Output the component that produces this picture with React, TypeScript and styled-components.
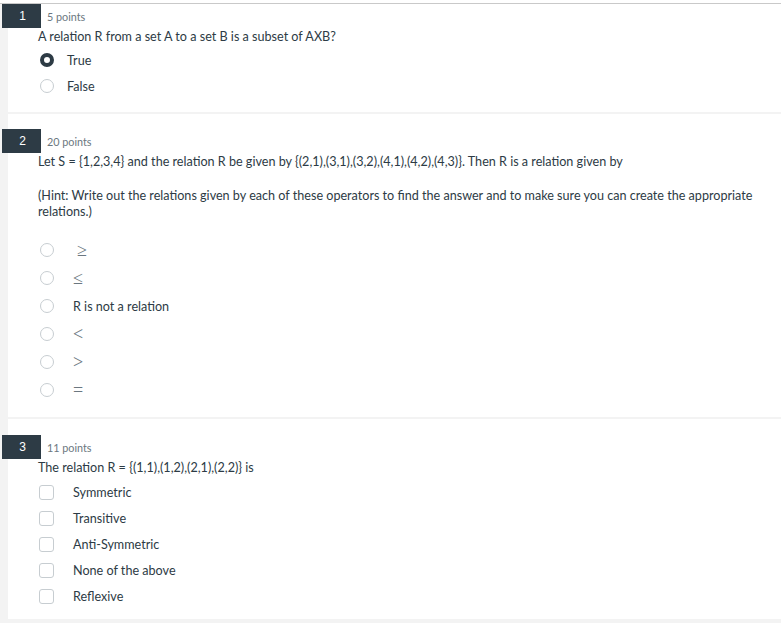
import React from "react";
import styled, { createGlobalStyle } from "styled-components";

const GlobalStyle = createGlobalStyle`
  html, body { margin: 0; padding: 0; }
  body {
    background: #f3f3f3;
    font-family: Lato, "Open Sans", "Liberation Sans", sans-serif;
    color: #2d3b45;
    width: 781px;
    height: 623px;
    overflow: hidden;
  }
`;

const TopRule = styled.div`
  height: 3px;
  background: #fff;
  border-bottom: 1px solid #c9c9c9;
`;

const Card = styled.section<{ $pt: number; $pb: number }>`
  background: #fff;
  margin-left: 8px;
  margin-bottom: 2px;
  padding-top: ${(p) => p.$pt}px;
  padding-bottom: ${(p) => p.$pb}px;
`;

const Header = styled.div`
  display: flex;
  align-items: center;
  height: 24px;
`;

const Badge = styled.div`
  margin-left: -6px;
  width: 39px;
  height: 24px;
  background: #2d3b45;
  color: #fff;
  font-family: "Liberation Sans", Arial, sans-serif;
  font-size: 12px;
  display: flex;
  align-items: center;
  justify-content: center;
  padding-left: 2px;
  box-sizing: border-box;
`;

const Points = styled.span`
  margin-left: 6px;
  font-size: 10.8px;
  color: #6b7780;
`;

const Body = styled.div`
  padding-left: 30px;
  padding-right: 20px;
`;

const QText = styled.div<{ $lh?: number }>`
  font-size: 12.6px;
  line-height: ${(p) => p.$lh ?? 18}px;
`;

const Spacer = styled.div<{ $h: number }>`
  height: ${(p) => p.$h}px;
`;

const Options = styled.div<{ $mt: number }>`
  margin-top: ${(p) => p.$mt}px;
  display: flex;
  flex-direction: column;
`;

const Option = styled.label<{ $h: number; $gap: number }>`
  display: flex;
  align-items: center;
  height: ${(p) => p.$h}px;
  gap: ${(p) => p.$gap}px;
  font-size: 12.6px;
  padding-left: 2px;
`;

const Radio = styled.span<{ $checked?: boolean }>`
  width: 14px;
  height: 14px;
  border-radius: 50%;
  box-sizing: border-box;
  flex: none;
  background: #fff;
  border: ${(p) => (p.$checked ? "4px solid #2d3b45" : "1px solid #c7cdd1")};
`;

const Checkbox = styled.span`
  width: 15px;
  height: 15px;
  margin-left: -1px;
  border-radius: 3px;
  box-sizing: border-box;
  flex: none;
  border: 1px solid #c7cdd1;
  background: #fff;
`;

const Symbol = styled.span<{ $indent?: number }>`
  color: #6b7780;
  font-family: "Liberation Serif", "DejaVu Serif", serif;
  font-size: 18px;
  line-height: 18px;
  margin-left: ${(p) => p.$indent ?? 0}px;
`;

export default function App() {
  const q2 = [
    { t: "≥", sym: true, indent: 4 },
    { t: "≤", sym: true, indent: 0 },
    { t: "R is not a relation", sym: false },
    { t: "<", sym: true, indent: 0 },
    { t: ">", sym: true, indent: 0 },
    { t: "=", sym: true, indent: 0 },
  ];
  const q3 = ["Symmetric", "Transitive", "Anti-Symmetric", "None of the above", "Reflexive"];
  return (
    <>
      <GlobalStyle />
      <TopRule />
      <Card $pt={0} $pb={13}>
        <Header>
          <Badge>1</Badge>
          <Points>5 points</Points>
        </Header>
        <Body>
          <QText>A relation R from a set A to a set B is a subset of AXB?</QText>
          <Options $mt={1}>
            <Option $h={26} $gap={13}>
              <Radio $checked />
              True
            </Option>
            <Option $h={26} $gap={13}>
              <Radio />
              False
            </Option>
          </Options>
        </Body>
      </Card>
      <Card $pt={15} $pb={13}>
        <Header>
          <Badge>2</Badge>
          <Points>20 points</Points>
        </Header>
        <Body>
          <QText $lh={17}>
            Let S = {"{1,2,3,4}"} and the relation R be given by {"{(2,1),(3,1),(3,2),(4,1),(4,2),(4,3)}"}. Then R is a relation given by
          </QText>
          <Spacer $h={18} />
          <QText $lh={16}>
            (Hint: Write out the relations given by each of these operators to find the answer and to make sure you can create the appropriate relations.)
          </QText>
          <Options $mt={16}>
            {q2.map((o, i) => (
              <Option key={i} $h={28} $gap={19}>
                <Radio />
                {o.sym ? <Symbol $indent={o.indent}>{o.t}</Symbol> : o.t}
              </Option>
            ))}
          </Options>
        </Body>
      </Card>
      <Card $pt={16} $pb={10}>
        <Header>
          <Badge>3</Badge>
          <Points>11 points</Points>
        </Header>
        <Body>
          <QText>The relation R = {"{(1,1),(1,2),(2,1),(2,2)}"} is</QText>
          <Options $mt={2}>
            {q3.map((t) => (
              <Option key={t} $h={26} $gap={19}>
                <Checkbox />
                {t}
              </Option>
            ))}
          </Options>
        </Body>
      </Card>
    </>
  );
}
